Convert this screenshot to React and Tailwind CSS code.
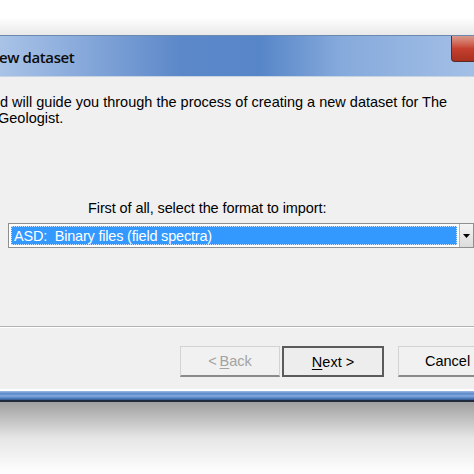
export default function App() {
  return (
    <div className="w-[474px] h-[474px] overflow-hidden bg-white flex flex-col font-['Liberation_Sans',Arial,sans-serif] text-black">
      {/* area above the window */}
      <div className="h-[35px] shrink-0 bg-gradient-to-b from-white via-white to-[#e9e9e9]" />

      {/* title bar */}
      <div className="h-[41px] shrink-0 border-t border-[#6a88b0] flex items-start justify-between bg-[linear-gradient(to_right,#a9c3e7_0%,#86a8da_18%,#5c88c9_38%,#5786c8_55%,#86aadc_72%,#a3bfe6_100%)]">
        <div className="pt-[11px] text-[15px] leading-[20px] text-[#0c0c0c] font-['Open_Sans',sans-serif] font-semibold -ml-[1px] tracking-[-0.4px]">
          ew dataset
        </div>
        <div className="w-[23px] h-[26px] rounded-bl-[4px] border-l border-b border-[#5a2a24] bg-gradient-to-b from-[#d99a8e] via-[#c6402f] to-[#a8301f]" />
      </div>

      {/* window body */}
      <div className="h-[313px] shrink-0 bg-[#f0f0f0] border-t border-[#c7d3e2] flex flex-col text-[14.5px] leading-[16px]">
        <div className="pt-[17px] whitespace-nowrap">d will guide you through the process of creating a new dataset for The</div>
        <div className="whitespace-nowrap -ml-[2px]">Geologist.</div>

        <div className="mt-[74px] ml-[88px] whitespace-nowrap tracking-[-0.1px]">First of all, select the format to import:</div>

        <div className="mt-[7px] ml-[8px] h-[25px] flex border border-[#8e8f8f] bg-white">
          <div className="flex-1 m-[2px] bg-[#3399ff] border border-dotted border-[#c9e2ff] text-white pl-[2px] leading-[18px] whitespace-nowrap tracking-[-0.2px]">
            ASD:&nbsp; Binary files (field spectra)
          </div>
          <div className="w-[14px] flex items-center justify-center bg-gradient-to-b from-[#f4f4f4] to-[#dcdcdc] border-l border-[#b5b5b5]">
            <svg width="7" height="4" viewBox="0 0 7 4"><path d="M0 0h7L3.5 4z" fill="#000" /></svg>
          </div>
        </div>

        <div className="mt-[78px] h-[2px] border-t border-[#b3b3b3] border-b border-b-white" />

        <div className="mt-[18px] flex items-stretch h-[31px] pl-[180px]">
          <div className="shrink-0 w-[100px] flex items-center justify-center border border-[#d3d3d3] border-b-[2px] border-b-[#8a8a8a] bg-[#f1f1f1] text-[#a3a3a3]">
            &lt; <span className="underline underline-offset-2 ml-[3px]">B</span>ack
          </div>
          <div className="shrink-0 ml-[2px] w-[102px] flex items-center justify-center border-[2px] border-[#5b5b5b] bg-[#ededed]">
            <span className="underline underline-offset-2">N</span>ext &gt;
          </div>
          <div className="shrink-0 ml-[14px] w-[90px] flex items-center justify-start pl-[26px] border border-[#d3d3d3] border-b-[2px] border-b-[#8a8a8a] bg-[#f1f1f1]">
            Cancel
          </div>
        </div>
      </div>

      {/* bottom frame */}
      <div className="h-[2px] shrink-0 bg-white" />
      <div className="h-[11px] shrink-0 border-b-[2px] border-[#1f2b3c] bg-[linear-gradient(to_bottom,#9dbbe6_0%,#5a88c8_30%,#86aadc_55%,#4f7fc0_80%,#34598c_100%)]" />

      {/* shadow below */}
      <div className="flex-1 bg-gradient-to-b from-[#a0a0a0] via-[#e6e6e6] to-white" />
    </div>
  );
}
